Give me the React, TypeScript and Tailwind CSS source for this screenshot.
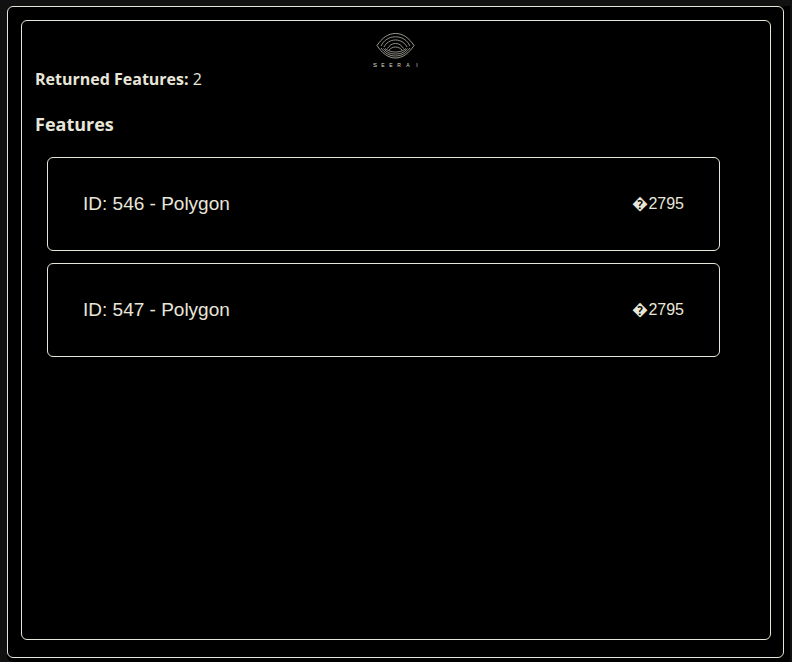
import React from "react";

interface Feature {
  id: number;
  type: string;
}

const features: Feature[] = [
  { id: 546, type: "Polygon" },
  { id: 547, type: "Polygon" },
];

const Logo: React.FC = () => {
  return (
    <svg
      width="48"
      height="36"
      viewBox="0 0 48 36"
      fill="none"
      stroke="#e8e6d9"
      role="img"
      aria-label="Seer AI"
      className="opacity-95"
    >
      {/* Eye outline */}
      <path
        d="M5 13.5 C10 6 16 1.5 23.5 1.5 C31 1.5 37 6 42 13.500 C37 21 31 26 23.5 26 C16 26 10 21 5 13.500 Z"
        strokeWidth="0.7"
      />
      {/* Arcs of the iris */}
      <g strokeWidth="0.65">
        <path d="M9 14 C12 8 17 4.800 23.500 4.800 C30 4.800 35 8 38 14" />
        <path d="M12 15 C14 11 18 8 23.500 8 C29 8 33 11 35 15" />
        <path d="M15.500 16.500 C17.500 13.500 19.500 11.500 23.500 11.500 C27.500 11.500 29.500 13.500 31.500 16.500" />
        <path d="M9 16 C13 21 17 24 23.500 24 C30 24 34 21 38 16" />
        <path d="M11.500 16.500 C15 20.500 18 22 23.500 22 C29 22 32 20.500 35.500 16.500" />
        <path d="M13 16.500 C17 19.500 20 20 23.500 20 C27 20 30 19.500 34 16.500" />
        <path d="M17 18 C19 16 21 15 23.500 15 C26 15 28 16 30 18" />
      </g>
      <g
        fill="#e8e6d9"
        stroke="none"
        fontFamily="Liberation Sans, sans-serif"
        fontSize="5"
        textAnchor="middle"
      >
        <text x="3" y="35" fontSize="6">S</text>
        <text x="11" y="35">E</text>
        <text x="19" y="35">E</text>
        <text x="27" y="35">R</text>
        <text x="36" y="35">A</text>
        <text x="45" y="35">I</text>
      </g>
    </svg>
  );
};

const App: React.FC = () => {
  return (
    <div className="flex min-h-screen flex-col bg-[#111111] pt-[6px] pr-[2px] pl-[7px] text-[#e8e6d9]">
      <div className="flex flex-1 flex-col rounded-l-md bg-black pr-[6px] pb-1">
        <main className="flex flex-1 flex-col rounded-md border border-[#e8e6d9] pt-[13px] pr-3 pb-[17px] pl-[13px]">
          <section className="flex-1 rounded-md border border-[#e8e6d9] px-[13px] pt-[11px] font-['Open_Sans','Noto_Sans',sans-serif]">
            <div className="flex justify-center">
              <Logo />
            </div>

            <p className="text-[16px] leading-[22px]">
              <strong>Returned Features:</strong> 2
            </p>
            <h3 className="mt-5 text-[18px] leading-7 font-bold">Features</h3>

            {/* Feature list */}
            <ul className="mt-[19px] mr-[37px] ml-3 space-y-3 font-['Liberation_Sans',Arial,sans-serif]">
              {features.map((feature) => (
                <li key={feature.id}>
                  <button
                    type="button"
                    className="flex w-full items-center justify-between rounded-md border border-[#e8e6d9] px-[35px] py-8 text-left"
                  >
                    <span className="text-[19px] leading-7">
                      ID: {feature.id} - {feature.type}
                    </span>
                    <span className="text-[16px] leading-7">{"\uFFFD"}2795</span>
                  </button>
                </li>
              ))}
            </ul>
          </section>
        </main>
      </div>
    </div>
  );
};

export default App;
